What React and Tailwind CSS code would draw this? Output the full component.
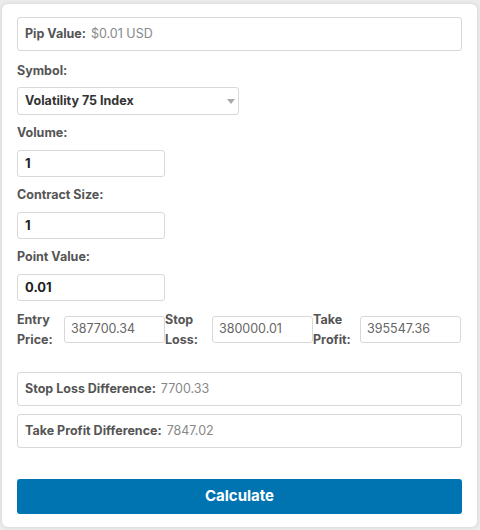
import React from "react";

const font = { fontFamily: "Inter, 'Noto Sans', sans-serif" };

function Label({ children }) {
  return <div className="text-[12.5px] font-bold text-[#555] leading-[16px]">{children}</div>;
}

function Input({ value, w }) {
  return (
    <div className={`${w} h-[27px] border border-[#d8d8d8] rounded-[3px] bg-white flex items-center px-[7px] text-[13px] font-bold text-[#222]`}>
      {value}
    </div>
  );
}

function InfoBox({ label, value }) {
  return (
    <div className="h-[34px] border border-[#d8d8d8] rounded-[3px] flex items-center px-[7px] text-[12.5px]">
      <span className="font-bold text-[#555]">{label}</span>
      <span className="ml-[5px] text-[#888]">{value}</span>
    </div>
  );
}

function PriceField({ l1, l2, value }) {
  return (
    <div className="flex items-start">
      <div className="w-[47px] text-[12.5px] font-bold text-[#555] leading-[20px]">
        <div>{l1}</div>
        <div>{l2}</div>
      </div>
      <div className="w-[101px] h-[27px] mt-[6px] border border-[#d8d8d8] rounded-[3px] flex items-center px-[6px] text-[12.5px] text-[#666]">
        {value}
      </div>
    </div>
  );
}

export default function App() {
  return (
    <div className="w-[480px] h-[530px] bg-[#ececec] pl-[2px] pt-[4px]" style={font}>
      <div className="w-[475px] h-[523px] bg-white rounded-[6px] shadow-[0_0_4px_rgba(0,0,0,0.12)] px-[15px] pt-[13px]">
        <InfoBox label="Pip Value:" value="$0.01 USD" />
        <div className="mt-[12px]"><Label>Symbol:</Label></div>
        <div className="mt-[8px] w-[222px] h-[28px] border border-[#d8d8d8] rounded-[3px] flex items-center justify-between pl-[7px] pr-[3px] text-[12.5px] font-bold text-[#333]">
          <span>Volatility 75 Index</span>
          <svg width="8" height="5" viewBox="0 0 8 5"><path d="M0 0h8L4 5z" fill="#aaa" /></svg>
        </div>
        <div className="mt-[10px]"><Label>Volume:</Label></div>
        <div className="mt-[9px]"><Input value="1" w="w-[148px]" /></div>
        <div className="mt-[10px]"><Label>Contract Size:</Label></div>
        <div className="mt-[9px]"><Input value="1" w="w-[148px]" /></div>
        <div className="mt-[10px]"><Label>Point Value:</Label></div>
        <div className="mt-[9px]"><Input value="0.01" w="w-[148px]" /></div>
        <div className="mt-[9px] flex">
          <PriceField l1="Entry" l2="Price:" value="387700.34" />
          <PriceField l1="Stop" l2="Loss:" value="380000.01" />
          <PriceField l1="Take" l2="Profit:" value="395547.36" />
        </div>
        <div className="mt-[22px] flex flex-col gap-[8px]">
          <InfoBox label="Stop Loss Difference:" value="7700.33" />
          <InfoBox label="Take Profit Difference:" value="7847.02" />
        </div>
        <button className="mt-[31px] w-full h-[35px] bg-[#0073b1] rounded-[3px] text-white font-bold text-[15px]">
          Calculate
        </button>
      </div>
    </div>
  );
}
